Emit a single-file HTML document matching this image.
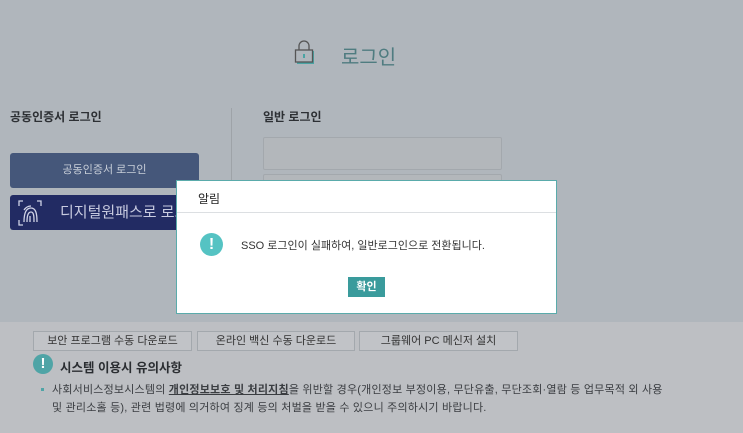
<!DOCTYPE html>
<html><head><meta charset="utf-8"><style>
*{margin:0;padding:0;box-sizing:border-box}
body{width:743px;height:433px;overflow:hidden;background:#bdbfc3;font-family:"Liberation Sans","Noto Sans CJK KR",sans-serif;position:relative;color:#2a2d31}
.top{position:absolute;left:0;top:0;width:743px;height:322px;background:#b0b6bc}
.a{position:absolute;white-space:nowrap}
.btn3{position:absolute;top:331px;height:20px;border:1px solid #a3a8ad;background:#c1c3c7;font-size:11px;text-align:center;line-height:18px;color:#333}
</style></head><body>
<div class="top"></div>
<svg class="a" style="left:293px;top:39px" width="24" height="26" viewBox="0 0 24 26">
<rect x="4" y="12" width="17" height="13" fill="#4aa3a3"/>
<path d="M6 11V7a5 5 0 0 1 10 0v4" fill="none" stroke="#555" stroke-width="1.3"/>
<rect x="2.5" y="11" width="17" height="12" fill="#b0b6bc" stroke="#555" stroke-width="1.3"/>
<rect x="10" y="15" width="2" height="4" fill="#4aa3a3"/>
</svg>
<div class="a" style="left:341px;top:41px;font-size:20px;color:#4f7c80">로그인</div>
<div class="a" style="left:10px;top:108px;font-size:12px;font-weight:bold;color:#2d3034">공동인증서 로그인</div>
<div class="a" style="left:231px;top:108px;width:1px;height:120px;background:#9ea3a8"></div>
<div class="a" style="left:263px;top:108px;font-size:12px;font-weight:bold;color:#2d3034">일반 로그인</div>
<div class="a" style="left:263px;top:137px;width:239px;height:33px;border:1px solid #a3a8ad;background:#b3b7bb;border-radius:2px"></div>
<div class="a" style="left:263px;top:174px;width:239px;height:33px;border:1px solid #a3a8ad;background:#b3b7bb;border-radius:2px"></div>
<div class="a" style="left:10px;top:153px;width:189px;height:35px;background:#45577a;border-radius:3px;color:#c9cfd9;font-size:11px;text-align:center;line-height:35px">공동인증서 로그인</div>
<div class="a" style="left:10px;top:195px;width:189px;height:35px;background:#222b63;border-radius:3px;color:#c8cbe0;font-size:15px;line-height:35px;padding-left:50px">디지털원패스로 로그인</div>
<svg class="a" style="left:18px;top:200px" width="24" height="26" viewBox="0 0 24 26" fill="none" stroke="#d0d3e6" stroke-width="1.3">
<path d="M1 6V1h4M1 20v5h4M23 6V1h-4"/><path d="M6 22c0-8 2-14 7-14s6 6 6 14M9 22c0-6 1-10 4-10s3 5 3 10M12 22v-6M6 10c2-3 4-4 7-4"/>
</svg>
<div class="a" style="left:176px;top:180px;width:381px;height:134px;background:#fff;border:1px solid #5aabab"></div>
<div class="a" style="left:198px;top:190px;font-size:12px;color:#222">알림</div>
<div class="a" style="left:177px;top:212px;width:379px;height:1px;background:#dcdfe2"></div>
<div class="a" style="left:200px;top:233px;width:23px;height:23px;border-radius:50%;background:#55c3c3;color:#fff;font-weight:bold;font-size:16px;text-align:center;line-height:23px">!</div>
<div class="a" style="left:241px;top:237px;font-size:11px;color:#333">SSO 로그인이 실패하여, 일반로그인으로 전환됩니다.</div>
<div class="a" style="left:348px;top:277px;width:37px;height:20px;background:#3a9b9c;color:#fff;font-size:11px;font-weight:bold;text-align:center;line-height:20px">확인</div>
<div class="btn3" style="left:33px;width:159px">보안 프로그램 수동 다운로드</div>
<div class="btn3" style="left:197px;width:158px">온라인 백신 수동 다운로드</div>
<div class="btn3" style="left:359px;width:159px">그룹웨어 PC 메신저 설치</div>
<div class="a" style="left:33px;top:354px;width:20px;height:20px;border-radius:50%;background:#4fa4a6;color:#fff;font-weight:bold;font-size:15px;text-align:center;line-height:20px">!</div>
<div class="a" style="left:60px;top:357px;font-size:12.5px;font-weight:bold;color:#2a2d31">시스템 이용시 유의사항</div>
<div class="a" style="left:41px;top:388px;width:3px;height:3px;background:#4fa4a6"></div>
<div class="a" style="left:52px;top:381px;font-size:11px;color:#3a3d41;line-height:18px;letter-spacing:0.2px">사회서비스정보시스템의 <b style="text-decoration:underline">개인정보보호 및 처리지침</b>을 위반할 경우(개인정보 부정이용, 무단유출, 무단조회·열람 등 업무목적 외 사용<br>및 관리소홀 등), 관련 법령에 의거하여 징계 등의 처벌을 받을 수 있으니 주의하시기 바랍니다.</div>
</body></html>
